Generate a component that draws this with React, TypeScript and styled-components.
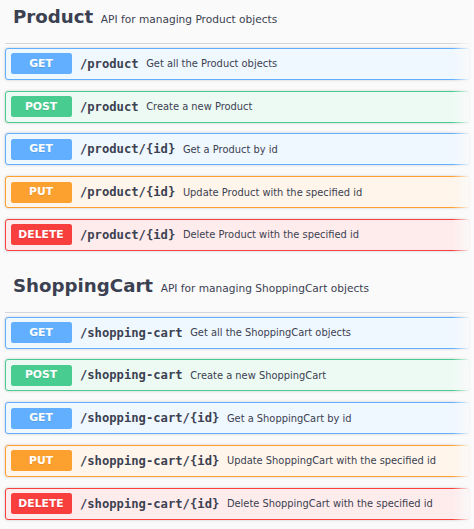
import React from 'react';
import styled, { createGlobalStyle } from 'styled-components';

type Method = 'GET' | 'POST' | 'PUT' | 'DELETE';

const methodColors: Record<Method, { main: string; bg: string }> = {
    GET: { main: '#61affe', bg: '#eff7ff' },
    POST: { main: '#49cc90', bg: '#edfaf4' },
    PUT: { main: '#fca130', bg: '#fff5ea' },
    DELETE: { main: '#f93e3e', bg: '#feebeb' },
};

const GlobalStyle = createGlobalStyle`
    html, body {
        margin: 0;
        padding: 0;
        background: #fafafa;
    }
    body {
        font-family: "DejaVu Sans", "Noto Sans", sans-serif;
        color: #3b4151;
    }
`;

const Page = styled.div`
    position: relative;
    padding: 0 4px 0 5px;
    overflow: hidden;
`;

// soft fade on the right edge of the capture
const RightFade = styled.div`
    position: absolute;
    top: 0;
    right: 0;
    bottom: 0;
    width: 22px;
    background: linear-gradient(to right, rgba(250, 250, 250, 0), #fafafa 85%);
    pointer-events: none;
`;

// margin collapses with the last row's bottom margin
const Section = styled.section`
    & + & {
        margin-top: 18px;
    }
`;

const TagHeader = styled.div`
    display: flex;
    align-items: baseline;
    padding: 6px 16px 14px 8px;
    margin-bottom: 4px;
    border-bottom: 1px solid rgba(59, 65, 81, 0.2);
`;

const TagTitle = styled.h3`
    margin: 0;
    font-size: 18.2px;
    line-height: 1.25;
    font-weight: 700;
    color: #3b4151;
`;

const TagDesc = styled.small`
    margin-left: 7.6px;
    font-size: 10.6px;
    color: #3b4151;
`;

const OpRow = styled.div<{ $method: Method }>`
    display: flex;
    align-items: center;
    padding: 4.5px;
    margin-bottom: 10.75px;
    border: 1px solid ${(p) => methodColors[p.$method].main};
    border-radius: 3px;
    background: ${(p) => methodColors[p.$method].bg};
    box-shadow: 0 0 3px rgba(0, 0, 0, 0.19);
`;

const Badge = styled.span<{ $method: Method }>`
    min-width: 61px;
    padding: 4.5px 0;
    border-radius: 2.5px;
    background: ${(p) => methodColors[p.$method].main};
    color: #fff;
    font-size: 10.8px;
    line-height: 12px;
    font-weight: 700;
    text-align: center;
    text-shadow: 0 1px 0 rgba(0, 0, 0, 0.1);
`;

const PathText = styled.span`
    padding: 0 7.6px 0 8.4px;
    font-family: "DejaVu Sans Mono", "Liberation Mono", monospace;
    font-size: 12.2px;
    font-weight: 700;
    color: #3b4151;
`;

const Summary = styled.span`
    font-size: 9.9px;
    color: #3b4151;
`;

type Op = { method: Method; path: string; summary: string };

const tags: { name: string; desc: string; ops: Op[] }[] = [
    {
        name: 'Product',
        desc: 'API for managing Product objects',
        ops: [
            { method: 'GET', path: '/product', summary: 'Get all the Product objects' },
            { method: 'POST', path: '/product', summary: 'Create a new Product' },
            { method: 'GET', path: '/product/{id}', summary: 'Get a Product by id' },
            { method: 'PUT', path: '/product/{id}', summary: 'Update Product with the specified id' },
            { method: 'DELETE', path: '/product/{id}', summary: 'Delete Product with the specified id' },
        ],
    },
    {
        name: 'ShoppingCart',
        desc: 'API for managing ShoppingCart objects',
        ops: [
            { method: 'GET', path: '/shopping-cart', summary: 'Get all the ShoppingCart objects' },
            { method: 'POST', path: '/shopping-cart', summary: 'Create a new ShoppingCart' },
            { method: 'GET', path: '/shopping-cart/{id}', summary: 'Get a ShoppingCart by id' },
            { method: 'PUT', path: '/shopping-cart/{id}', summary: 'Update ShoppingCart with the specified id' },
            { method: 'DELETE', path: '/shopping-cart/{id}', summary: 'Delete ShoppingCart with the specified id' },
        ],
    },
];

const App = () => {
    return (
        <>
            <GlobalStyle />
            <Page>
                {tags.map((tag) => (
                    <Section key={tag.name}>
                        <TagHeader>
                            <TagTitle>{tag.name}</TagTitle>
                            <TagDesc>{tag.desc}</TagDesc>
                        </TagHeader>
                        {tag.ops.map((op, i) => (
                            <OpRow key={i} $method={op.method}>
                                <Badge $method={op.method}>{op.method}</Badge>
                                <PathText>{op.path}</PathText>
                                <Summary>{op.summary}</Summary>
                            </OpRow>
                        ))}
                    </Section>
                ))}
                <RightFade />
            </Page>
        </>
    );
};

export default App;
